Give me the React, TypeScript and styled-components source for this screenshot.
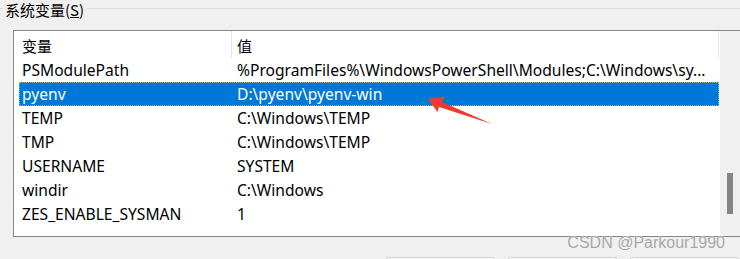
import React from "react";
import styled, { createGlobalStyle } from "styled-components";

const Global = createGlobalStyle`
  html, body { margin: 0; padding: 0; background: #f0f0f0; }
  body { font-family: "Noto Sans", "Noto Sans CJK SC", sans-serif; }
`;

const Page = styled.div`
  position: relative;
  width: 740px;
  height: 259px;
  overflow: hidden;
  background: #f0f0f0;
  font-family: "Noto Sans", "Noto Sans CJK SC", sans-serif;
  font-size: 15.6px;
  color: #000;
`;

const GroupHeader = styled.div`
  display: flex;
  align-items: flex-start;
  height: 16px;
`;

const GroupTick = styled.div`
  width: 3px;
  margin-top: 8px;
  border-top: 1px solid #dcdcdc;
`;

const GroupLabel = styled.div`
  padding: 2px 3px 0 2px;
  font-family: "Noto Sans CJK SC", sans-serif;
  font-size: 15px;
  line-height: 16px;
  height: 18px;
  u { text-underline-offset: 1px; }
`;

const GroupLine = styled.div`
  flex: 1;
  margin-top: 8px;
  border-top: 1px solid #dcdcdc;
`;

const ListBox = styled.div`
  display: flex;
  margin: 14px 0 0 13px;
  height: 205px;
  border: 1px solid #828790;
  border-right: none;
  background: #fff;
`;

const ListContent = styled.div`
  width: 706px;
  display: flex;
  flex-direction: column;
`;

const HeaderRow = styled.div`
  display: flex;
  height: 27px;
  padding-left: 5px;
  align-items: stretch;
`;

const HeaderCell = styled.div<{ $w: number; $pad: number }>`
  box-sizing: border-box;
  width: ${(p) => p.$w}px;
  padding-left: ${(p) => p.$pad}px;
  display: flex;
  align-items: center;
  border-right: 1px solid #e5e5e5;
  font-family: "Noto Sans CJK SC", sans-serif;
  font-size: 15px;
  padding-top: 1px;
`;

const Row = styled.div<{ $selected?: boolean }>`
  box-sizing: border-box;
  display: flex;
  height: 24px;
  width: 700px;
  margin-left: 5px;
  align-items: center;
  background: ${(p) => (p.$selected ? "#0078d7" : "transparent")};
  color: ${(p) => (p.$selected ? "#fff" : "#000")};
  outline: ${(p) => (p.$selected ? "1px dotted #f0a030" : "none")};
  outline-offset: -1px;
  white-space: nowrap;
`;

const Cell = styled.div<{ $w?: number; $pad: number }>`
  box-sizing: border-box;
  ${(p) => (p.$w ? `width: ${p.$w}px;` : "flex: 1;")}
  padding-left: ${(p) => p.$pad}px;
  overflow: hidden;
`;

const ScrollTrack = styled.div`
  width: 20px;
  display: flex;
  flex-direction: column;
  background: #f0f0f0;
  padding-top: 142px;
  box-sizing: border-box;
`;

const ScrollThumb = styled.div`
  width: 6px;
  height: 41px;
  margin-left: 7px;
  background: #858585;
`;

const Footer = styled.div`
  display: flex;
  justify-content: flex-end;
  gap: 11px;
  margin-top: 20px;
`;

const Button = styled.div`
  box-sizing: border-box;
  width: 111px;
  height: 26px;
  border: 1px solid #d0d0d0;
  border-radius: 4px;
  background: #fdfdfd;
  flex-shrink: 0;
`;

const Watermark = styled.div`
  position: absolute;
  right: 15px;
  top: 234px;
  font-family: "Liberation Sans", Arial, sans-serif;
  font-size: 16px;
  color: #a6a6a6;
  text-shadow: 0 0 1px #fff;
  white-space: nowrap;
`;

const Arrow = styled.svg`
  position: absolute;
  left: 0;
  top: 0;
  pointer-events: none;
`;

const rows = [
  { name: "PSModulePath", value: "%ProgramFiles%\\WindowsPowerShell\\Modules;C:\\Windows\\sy..." },
  { name: "pyenv", value: "D:\\pyenv\\pyenv-win", selected: true },
  { name: "TEMP", value: "C:\\Windows\\TEMP" },
  { name: "TMP", value: "C:\\Windows\\TEMP" },
  { name: "USERNAME", value: "SYSTEM" },
  { name: "windir", value: "C:\\Windows" },
  { name: "ZES_ENABLE_SYSMAN", value: "1" },
];

export default function App() {
  return (
    <Page>
      <Global />
      <GroupHeader>
        <GroupTick />
        <GroupLabel>
          系统变量(<u>S</u>)
        </GroupLabel>
        <GroupLine />
      </GroupHeader>
      <ListBox>
        <ListContent>
          <HeaderRow>
            <HeaderCell $w={213} $pad={3}>变量</HeaderCell>
            <HeaderCell $w={487} $pad={5}>值</HeaderCell>
          </HeaderRow>
          {rows.map((r) => (
            <Row key={r.name} $selected={r.selected}>
              <Cell $w={213} $pad={3}>{r.name}</Cell>
              <Cell $pad={5}>{r.value}</Cell>
            </Row>
          ))}
        </ListContent>
        <ScrollTrack>
          <ScrollThumb />
        </ScrollTrack>
      </ListBox>
      <Footer>
        <Button />
        <Button />
        <Button />
      </Footer>
      <Watermark>CSDN @Parkour1990</Watermark>
      <Arrow width="740" height="259" viewBox="0 0 740 259">
        <polygon
          points="428,99 445,96.5 442,102 492,124 439,107 437.5,112"
          fill="#f23a2c"
        />
      </Arrow>
    </Page>
  );
}
